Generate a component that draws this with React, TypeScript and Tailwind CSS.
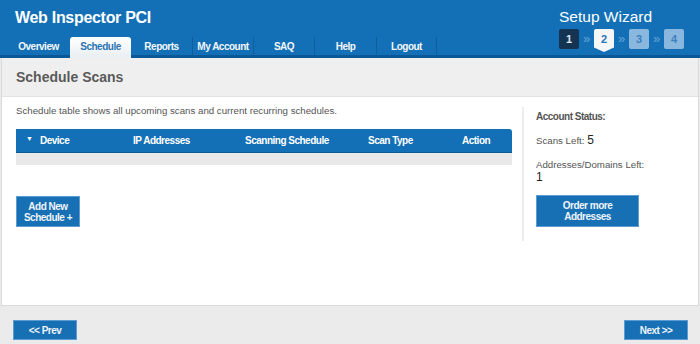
export default function App() {
  const tabs = [
    { label: "Overview", w: "w-[63px]", active: false, sep: false },
    { label: "Schedule", w: "w-[61px]", active: true, sep: false },
    { label: "Reports", w: "w-[61px]", active: false, sep: false },
    { label: "My Account", w: "w-[61px]", active: false, sep: true },
    { label: "SAQ", w: "w-[61px]", active: false, sep: true },
    { label: "Help", w: "w-[62px]", active: false, sep: true },
    { label: "Logout", w: "w-[61px]", active: false, sep: true, last: true },
  ];

  const btn =
    "bg-[#1870b4] border border-[#5d9cd2] text-[#eef4fa] text-[10px] font-bold tracking-[-0.5px] leading-[11px] flex items-center justify-center text-center";

  return (
    <div className="w-[700px] h-[344px] overflow-hidden bg-[#ebebeb] font-['Liberation_Sans',Arial,sans-serif]">
      {/* Header */}
      <div className="h-[58px] bg-[#1370b6] border-b-[3px] border-[#0b5896] flex justify-between">
        <div className="pl-[15px] pt-[9px] flex flex-col">
          <div className="text-white text-[16px] font-bold tracking-[-0.3px] leading-[18px]">
            Web Inspector PCI
          </div>
          <div className="flex items-end mt-[10px] ml-[-8px]">
            {tabs.map((t) =>
              t.active ? (
                <div
                  key={t.label}
                  className={`${t.w} h-[21px] mb-[-3px] rounded-t-[3px] bg-gradient-to-b from-white to-[#e9eef2] text-[#2b74b4] text-[10px] font-bold tracking-[-0.5px] leading-[19px] text-center`}
                >
                  {t.label}
                </div>
              ) : (
                <div
                  key={t.label}
                  className={`${t.w} h-[18px] text-[#f3f7fb] text-[10px] font-bold tracking-[-0.5px] leading-[19px] text-center ${
                    t.sep ? "border-l border-[#0f5f9d]" : ""
                  } ${t.last ? "border-r border-[#0f5f9d]" : ""}`}
                >
                  {t.label}
                </div>
              )
            )}
          </div>
        </div>
        <div className="pr-[16px] pt-[8px] flex flex-col items-start">
          <div className="text-white text-[15.5px] leading-[18px]">Setup Wizard</div>
          <div className="flex items-start mt-[3px]">
            <div className="w-[20px] h-[20px] rounded-[2px] bg-[#143452] text-[#dfe6ee] text-[11px] font-bold leading-[20px] text-center">
              1
            </div>
            <div className="w-[15px] h-[20px] text-[#6aa4d6] text-[13px] leading-[19px] text-center">
              »
            </div>
            <div className="w-[20px] h-[23px] bg-[#f4f6f8] rounded-t-[2px] [clip-path:polygon(0_0,100%_0,100%_80%,50%_100%,0_80%)] text-[#2a74b8] text-[11px] font-bold leading-[20px] text-center">
              2
            </div>
            <div className="w-[15px] h-[20px] text-[#6aa4d6] text-[13px] leading-[19px] text-center">
              »
            </div>
            <div className="w-[20px] h-[20px] rounded-[2px] bg-[#8ab7dd] text-[#3b80c2] text-[11px] font-bold leading-[20px] text-center">
              3
            </div>
            <div className="w-[15px] h-[20px] text-[#6aa4d6] text-[13px] leading-[19px] text-center">
              »
            </div>
            <div className="w-[20px] h-[20px] rounded-[2px] bg-[#8ab7dd] text-[#3b80c2] text-[11px] font-bold leading-[20px] text-center">
              4
            </div>
          </div>
        </div>
      </div>

      {/* Card */}
      <div className="mx-[1px] h-[248px] bg-white border border-t-0 border-[#dadada] flex flex-col">
        <div className="h-[39px] shrink-0 bg-[#efefef] border-b border-[#e3e3e3] pl-[14px] pt-[11px]">
          <div className="text-[#5a5a5a] text-[14px] font-bold leading-[16px]">Schedule Scans</div>
        </div>
        <div className="flex">
          {/* Left column */}
          <div className="w-[520px] pl-[14px] pt-[8px]">
            <div className="text-[#555] text-[9.7px] leading-[12px]">
              Schedule table shows all upcoming scans and current recurring schedules.
            </div>
            <div className="mt-[12px] w-[496px]">
              <div className="h-[24px] bg-[#1370b6] rounded-tr-[3px] border-b border-[#0c5a94] flex items-center text-white text-[10px] font-bold tracking-[-0.5px] leading-[12px]">
                <div className="w-[117px] pl-[10px] flex items-center">
                  <span className="text-[7px] w-[14px] leading-[10px] mt-[-3px]">▼</span>
                  <span>Device</span>
                </div>
                <div className="w-[112px]">IP Addresses</div>
                <div className="w-[123px]">Scanning Schedule</div>
                <div className="w-[94px]">Scan Type</div>
                <div>Action</div>
              </div>
              <div className="h-[12px] bg-[#e9e9e9]" />
            </div>
            <div className={`${btn} mt-[31px] w-[64px] h-[31px]`}>
              Add New
              <br />
              Schedule +
            </div>
          </div>
          {/* Right column */}
          <div className="mt-[10px] h-[134px] border-l-2 border-[#ededed] pl-[12px] pt-[4px] w-[170px]">
            <div className="text-[#555] text-[10px] font-bold tracking-[-0.5px] leading-[12px]">
              Account Status:
            </div>
            <div className="mt-[11px] text-[#555] text-[9.7px] leading-[12px]">
              Scans Left: <span className="text-[#222] text-[12px]">5</span>
            </div>
            <div className="mt-[12px] text-[#555] text-[9.7px] leading-[12px]">
              Addresses/Domains Left:
            </div>
            <div className="text-[#222] text-[12px] leading-[13px]">1</div>
            <div className={`${btn} mt-[11px] w-[103px] h-[32px]`}>
              Order more
              <br />
              Addresses
            </div>
          </div>
        </div>
      </div>

      {/* Footer nav */}
      <div className="flex justify-between pl-[13px] pr-[12px] pt-[14px]">
        <div className={`${btn} w-[64px] h-[20px]`}>&lt;&lt; Prev</div>
        <div className={`${btn} w-[64px] h-[20px]`}>Next &gt;&gt;</div>
      </div>
    </div>
  );
}
